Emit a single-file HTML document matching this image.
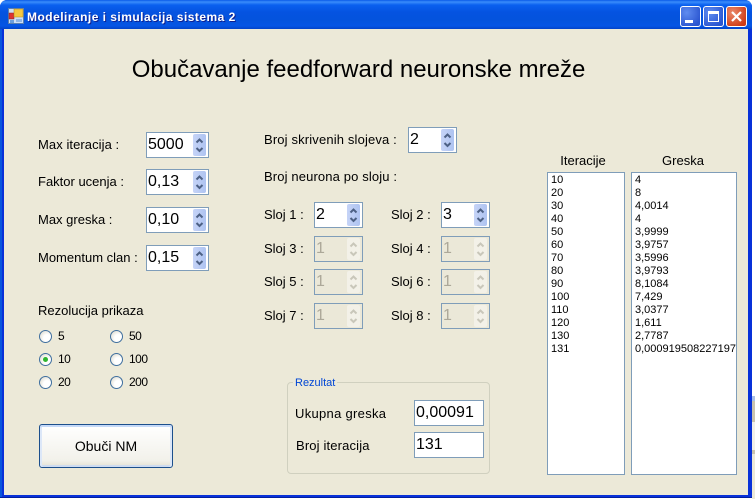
<!DOCTYPE html>
<html><head><meta charset="utf-8"><style>
html,body{margin:0;padding:0;background:#fff}
#w{position:relative;width:755px;height:499px;overflow:hidden;background:#fff;font-family:"Liberation Sans",sans-serif;color:#000}
#w div,#w span{position:absolute;box-sizing:border-box}
.t{font-size:13px;line-height:16px;height:16px;white-space:nowrap}
.n{font-size:12px;letter-spacing:-.5px}
.sp,.tb{background:#fff;border:1px solid #7f9db9;height:26px;font-size:16px;line-height:24px;padding-left:1px;white-space:nowrap}
.sp svg{position:absolute;right:2px;top:1px}
.dis{background:#ebe8d8;color:#aca899}
.r{width:13px;height:13px;border-radius:50%;border:1px solid #3f6f9f;background:radial-gradient(circle at 65% 65%,#fff 35%,#dcd9cc 90%)}
.l{background:#fff;border:1px solid #7f9db9;font-size:11px;line-height:13px;padding:1px 0 0 3px;white-space:pre}
</style></head><body>
<svg width="0" height="0" style="position:absolute"><defs>
<linearGradient id="g" x1="0" y1="0" x2="1" y2="0"><stop offset="0" stop-color="#c6d4f7"/><stop offset="1" stop-color="#aec3f1"/></linearGradient>
<g id="a"><rect x="0" y="0" width="13" height="22" rx="2" fill="url(#g)"/><path d="M3.5 8.5L6.5 5.5L9.5 8.5M3.5 14L6.5 17L9.5 14" fill="none" stroke="#4d6185" stroke-width="2"/></g>
<g id="b"><rect x="0" y="0" width="13" height="22" rx="2" fill="#f3f1e8"/><path d="M3.5 8.5L6.5 5.5L9.5 8.5M3.5 14L6.5 17L9.5 14" fill="none" stroke="#c9c7ba" stroke-width="2"/></g>
</defs></svg>
<div id="w">
<div style="left:0;top:0;width:752px;height:498px;background:#0831d9;border-radius:7px 7px 0 0;border-bottom:1px solid #001ea0"></div>
<div style="left:0;top:0;width:752px;height:29px;border-radius:7px 7px 0 0;background:linear-gradient(#0a5ae8 0,#3a8cfb 2px,#0a60ef 5px,#0553e1 12px,#0453dd 20px,#0555e5 26px,#0343c8 29px)"></div>
<div style="left:0;top:29px;width:2px;height:468px;background:#0855dd"></div>
<div style="left:4px;top:29px;width:744px;height:466px;background:#ece9d8"></div>

<svg style="position:absolute;left:8px;top:8px" width="16" height="16"><rect x=".5" y=".5" width="15" height="15" fill="#cfe0f5" stroke="#5a7fb0"/><rect x="1" y="5" width="5" height="6" fill="#d33" stroke="#822" stroke-width=".5"/><rect x="6" y="1" width="9" height="8" fill="#f5c842" stroke="#b08a20" stroke-width=".5"/><rect x="2" y="12" width="4" height="3" fill="#6c9fdc"/><rect x="8" y="11" width="6" height="3" fill="#8fb5e5"/></svg>
<div class="t" style="left:27px;top:9px;color:#fff;font-weight:bold;font-size:12px;letter-spacing:.47px;text-shadow:1px 1px 0 #0f1f8f">Modeliranje i simulacija sistema 2</div>

<div style="left:680px;top:6px;width:21px;height:21px;border:1px solid #fff;border-radius:3px;background:radial-gradient(circle at 30% 30%,#5f8cf0,#2a55d0 80%)"></div>
<div style="left:685px;top:20px;width:8px;height:3px;background:#fff"></div>
<div style="left:703px;top:6px;width:21px;height:21px;border:1px solid #fff;border-radius:3px;background:radial-gradient(circle at 30% 30%,#5f8cf0,#2a55d0 80%)"></div>
<div style="left:708px;top:11px;width:11px;height:11px;border:1px solid #fff;border-top-width:3px"></div>
<div style="left:726px;top:6px;width:21px;height:21px;border:1px solid #fff;border-radius:3px;background:radial-gradient(circle at 30% 30%,#ea8a6c,#cf3a14 80%)"></div>
<svg style="position:absolute;left:726px;top:6px" width="21" height="21"><path d="M6 6L15 15M15 6L6 15" stroke="#fff" stroke-width="2.2"/></svg>

<div style="left:752px;top:396px;width:3px;height:5px;background:#a9bfe8"></div>
<div style="left:752px;top:401px;width:3px;height:21px;background:#c9c3b0"></div>
<div style="left:752px;top:422px;width:3px;height:28px;background:#f2f0e8"></div>
<div style="left:752px;top:450px;width:3px;height:4px;background:#c9c3b0"></div>
<div style="left:752px;top:454px;width:3px;height:45px;background:#ece9d8"></div>

<div style="left:0;top:55px;width:717px;text-align:center;font-size:24px;line-height:30px;white-space:nowrap">Obučavanje feedforward neuronske mreže</div>

<div class="t" style="left:38px;top:137px;letter-spacing:.07px">Max iteracija :</div>
<div class="t" style="left:38px;top:174px">Faktor ucenja :</div>
<div class="t" style="left:38px;top:212px">Max greska :</div>
<div class="t" style="left:38px;top:250px">Momentum clan :</div>
<div class="sp" style="left:146px;top:132px;width:63px">5000<svg width="13" height="22"><use href="#a"/></svg></div>
<div class="sp" style="left:146px;top:169px;width:63px">0,13<svg width="13" height="22"><use href="#a"/></svg></div>
<div class="sp" style="left:146px;top:207px;width:63px">0,10<svg width="13" height="22"><use href="#a"/></svg></div>
<div class="sp" style="left:146px;top:245px;width:63px">0,15<svg width="13" height="22"><use href="#a"/></svg></div>

<div class="t" style="left:38px;top:303px">Rezolucija prikaza</div>
<div class="r" style="left:39px;top:330px"></div><div class="t n" style="left:58px;top:328px">5</div>
<div class="r" style="left:39px;top:353px"></div><div style="left:43px;top:357px;width:5px;height:5px;border-radius:50%;background:#2fb52f"></div><div class="t n" style="left:58px;top:351px">10</div>
<div class="r" style="left:39px;top:376px"></div><div class="t n" style="left:58px;top:374px">20</div>
<div class="r" style="left:110px;top:330px"></div><div class="t n" style="left:129px;top:328px">50</div>
<div class="r" style="left:110px;top:353px"></div><div class="t n" style="left:129px;top:351px">100</div>
<div class="r" style="left:110px;top:376px"></div><div class="t n" style="left:129px;top:374px">200</div>

<div style="left:39px;top:424px;width:134px;height:44px;border:1px solid #1c4f8c;border-radius:3px;background:linear-gradient(#fff,#f2f1ea 85%,#e3e0d2);box-shadow:inset 0 2px 0 #c5d9f8,inset 2px 0 0 #dce7f8,inset -2px 0 0 #dce7f8,inset 0 -2px 0 #cfdcf0"></div>
<div class="t" style="left:39px;top:438px;width:134px;text-align:center;font-size:14px">Obuči NM</div>

<div class="t" style="left:264px;top:132px;letter-spacing:.15px">Broj skrivenih slojeva :</div>
<div class="sp" style="left:408px;top:127px;width:49px">2<svg width="13" height="22"><use href="#a"/></svg></div>
<div class="t" style="left:264px;top:169px;letter-spacing:.13px">Broj neurona po sloju :</div>

<div class="t" style="left:264px;top:207px">Sloj 1 :</div>
<div class="sp" style="left:314px;top:202px;width:49px">2<svg width="13" height="22"><use href="#a"/></svg></div>
<div class="t" style="left:391px;top:207px">Sloj 2 :</div>
<div class="sp" style="left:441px;top:202px;width:49px">3<svg width="13" height="22"><use href="#a"/></svg></div>
<div class="t" style="left:264px;top:241px">Sloj 3 :</div>
<div class="sp dis" style="left:314px;top:236px;width:49px">1<svg width="13" height="22"><use href="#b"/></svg></div>
<div class="t" style="left:391px;top:241px">Sloj 4 :</div>
<div class="sp dis" style="left:441px;top:236px;width:49px">1<svg width="13" height="22"><use href="#b"/></svg></div>
<div class="t" style="left:264px;top:274px">Sloj 5 :</div>
<div class="sp dis" style="left:314px;top:269px;width:49px">1<svg width="13" height="22"><use href="#b"/></svg></div>
<div class="t" style="left:391px;top:274px">Sloj 6 :</div>
<div class="sp dis" style="left:441px;top:269px;width:49px">1<svg width="13" height="22"><use href="#b"/></svg></div>
<div class="t" style="left:264px;top:308px">Sloj 7 :</div>
<div class="sp dis" style="left:314px;top:303px;width:49px">1<svg width="13" height="22"><use href="#b"/></svg></div>
<div class="t" style="left:391px;top:308px">Sloj 8 :</div>
<div class="sp dis" style="left:441px;top:303px;width:49px">1<svg width="13" height="22"><use href="#b"/></svg></div>

<div style="left:287px;top:382px;width:203px;height:92px;border:1px solid #d0d0bf;border-radius:4px"></div>
<div class="t" style="left:293px;top:375px;background:#ece9d8;color:#0046d5;font-size:11px;padding:0 2px">Rezultat</div>
<div class="t" style="left:295px;top:406px;letter-spacing:.3px">Ukupna greska</div>
<div class="t" style="left:296px;top:438px;letter-spacing:.15px">Broj iteracija</div>
<div class="tb" style="left:414px;top:400px;width:70px">0,00091</div>
<div class="tb" style="left:414px;top:432px;width:70px">131</div>

<div class="t" style="left:547px;top:153px;width:72px;text-align:center">Iteracije</div>
<div class="t" style="left:631px;top:153px;width:104px;text-align:center">Greska</div>
<div class="l" style="left:547px;top:172px;width:78px;height:303px">10
20
30
40
50
60
70
80
90
100
110
120
130
131</div>
<div class="l" style="left:631px;top:172px;width:106px;height:303px">4
8
4,0014
4
3,9999
3,9757
3,5996
3,9793
8,1084
7,429
3,0377
1,611
2,7787
0,000919508227197</div>
</div>
</body></html>
